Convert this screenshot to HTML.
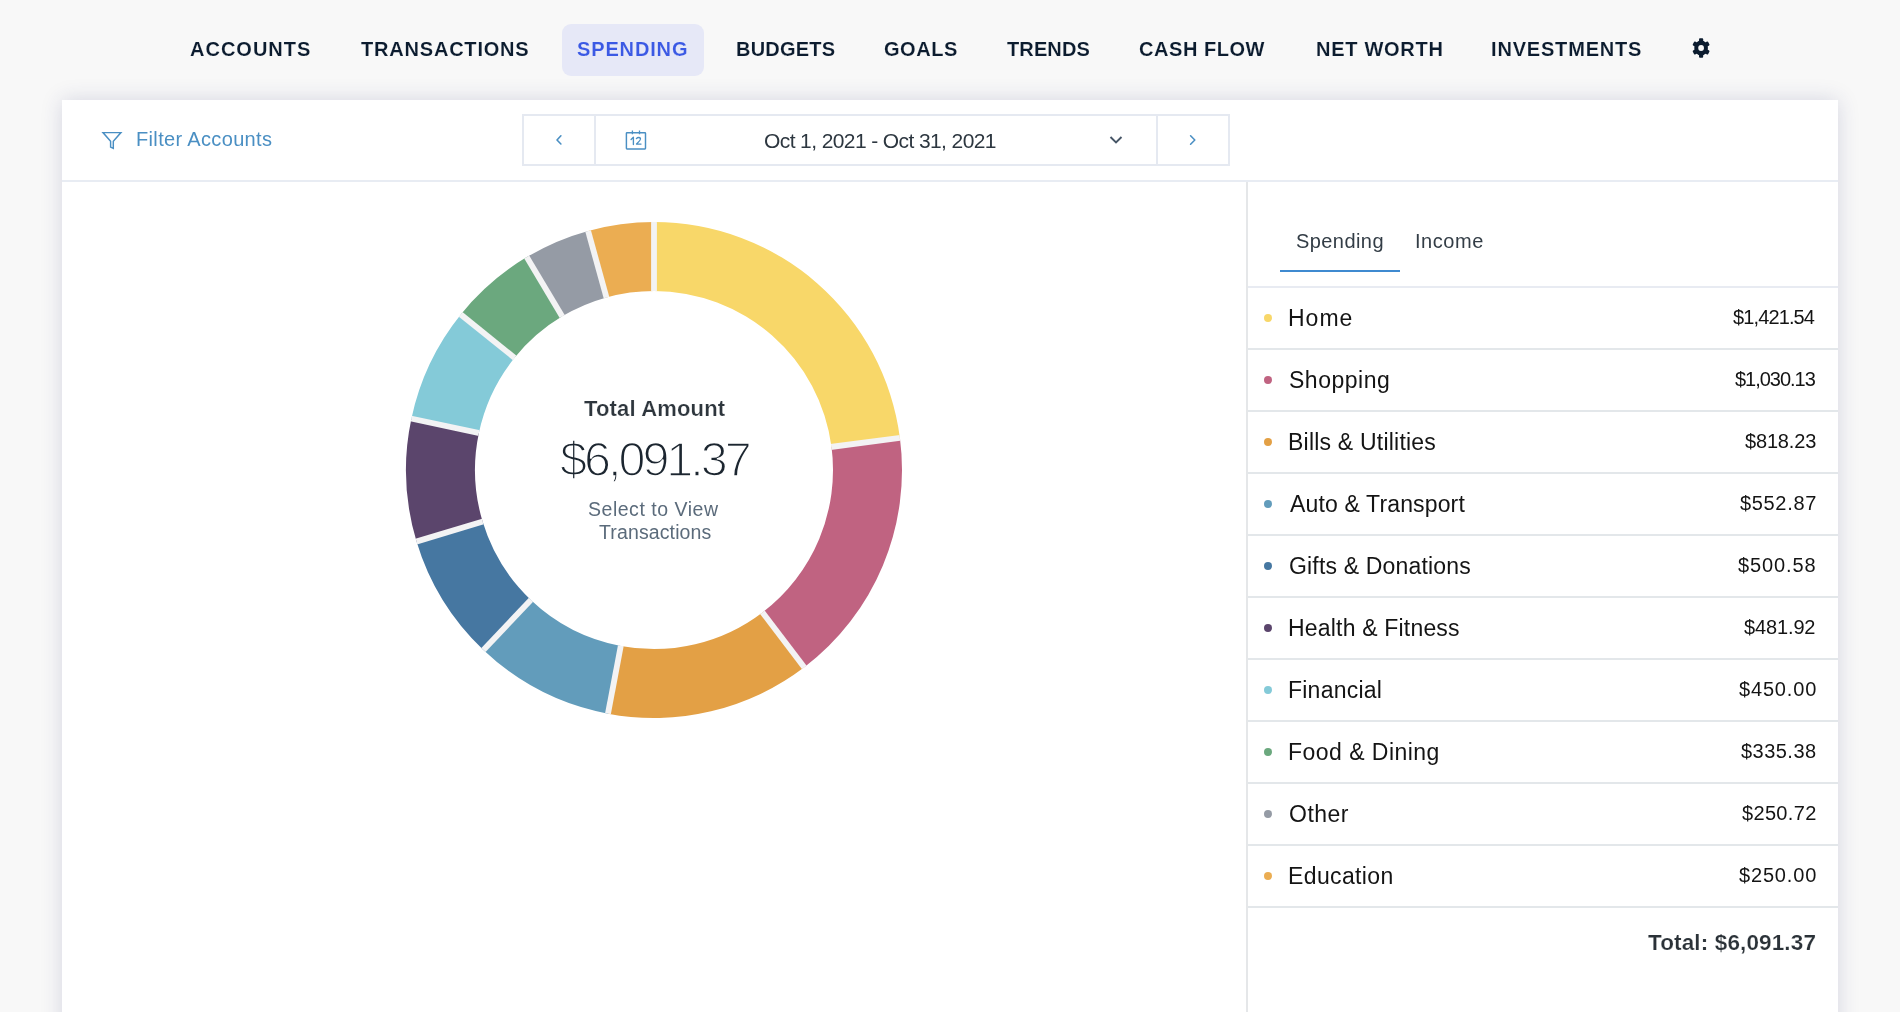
<!DOCTYPE html>
<html><head><meta charset="utf-8">
<style>
*{box-sizing:border-box;margin:0;padding:0}
html,body{width:1900px;height:1012px;overflow:hidden;background:#f8f8f8;font-family:"Liberation Sans",sans-serif}
.abs{position:absolute}
.t{position:absolute;white-space:nowrap;will-change:transform}
.hl{position:absolute;height:2px;background:#e3e7ea}
.vl{position:absolute;width:2px;background:#e5e9f1}
.dot{position:absolute;left:1264px;width:8px;height:8px;border-radius:50%}
</style></head><body>
<div class="abs" style="left:562px;top:24px;width:142px;height:52px;border-radius:9px;background:#e6e8f7"></div>
<div class="abs" style="left:62px;top:100px;width:1776px;height:1000px;background:#fff;box-shadow:0 0 20px rgba(40,45,110,0.17)"></div>
<div class="hl" style="left:62px;top:180px;width:1776px;background:#e8ecf3"></div>
<div class="abs" style="left:522px;top:114px;width:708px;height:52px;border:2px solid #e5e9f1"></div>
<div class="vl" style="left:594px;top:114px;height:52px"></div>
<div class="vl" style="left:1156px;top:114px;height:52px"></div>
<div class="vl" style="left:1246px;top:182px;height:830px;background:#e5e7e9"></div>
<div class="hl" style="left:1248px;top:286px;width:590px;background:#e8ebf2"></div>
<div class="abs" style="left:1280px;top:270px;width:120px;height:2px;background:#3f8ad0"></div>
<div class="hl" style="left:1248px;top:348px;width:590px"></div>
<div class="hl" style="left:1248px;top:410px;width:590px"></div>
<div class="hl" style="left:1248px;top:472px;width:590px"></div>
<div class="hl" style="left:1248px;top:534px;width:590px"></div>
<div class="hl" style="left:1248px;top:596px;width:590px"></div>
<div class="hl" style="left:1248px;top:658px;width:590px"></div>
<div class="hl" style="left:1248px;top:720px;width:590px"></div>
<div class="hl" style="left:1248px;top:782px;width:590px"></div>
<div class="hl" style="left:1248px;top:844px;width:590px"></div>
<div class="hl" style="left:1248px;top:906px;width:590px"></div>
<div class="dot" style="top:314px;background:#f8d769"></div>
<div class="dot" style="top:376px;background:#c06381"></div>
<div class="dot" style="top:438px;background:#e3a045"></div>
<div class="dot" style="top:500px;background:#629cbb"></div>
<div class="dot" style="top:562px;background:#4677a1"></div>
<div class="dot" style="top:624px;background:#5b456c"></div>
<div class="dot" style="top:686px;background:#84cad8"></div>
<div class="dot" style="top:748px;background:#6ba87e"></div>
<div class="dot" style="top:810px;background:#959ba5"></div>
<div class="dot" style="top:872px;background:#ebad52"></div>
<svg class="abs" style="left:0;top:0" width="1240" height="1012"><defs><clipPath id="rc"><path clip-rule="evenodd" d="M406 470A248 248 0 1 1 902 470A248 248 0 1 1 406 470ZM475 470A179 179 0 1 0 833 470A179 179 0 1 0 475 470Z"/></clipPath></defs><path d="M654.00 222.00A248 248 0 0 1 899.92 437.94L831.50 446.86A179 179 0 0 0 654.00 291.00Z" fill="#f8d769"/><path d="M899.92 437.94A248 248 0 0 1 804.26 667.30L762.45 612.40A179 179 0 0 0 831.50 446.86Z" fill="#c06381"/><path d="M804.26 667.30A248 248 0 0 1 607.98 713.69L620.79 645.89A179 179 0 0 0 762.45 612.40Z" fill="#e3a045"/><path d="M607.98 713.69A248 248 0 0 1 483.39 649.99L530.86 599.91A179 179 0 0 0 620.79 645.89Z" fill="#629cbb"/><path d="M483.39 649.99A248 248 0 0 1 416.53 541.49L482.60 521.60A179 179 0 0 0 530.86 599.91Z" fill="#4677a1"/><path d="M416.53 541.49A248 248 0 0 1 411.38 418.64L478.88 432.93A179 179 0 0 0 482.60 521.60Z" fill="#5b456c"/><path d="M411.38 418.64A248 248 0 0 1 460.80 314.50L514.56 357.77A179 179 0 0 0 478.88 432.93Z" fill="#84cad8"/><path d="M460.80 314.50A248 248 0 0 1 526.77 257.12L562.17 316.35A179 179 0 0 0 514.56 357.77Z" fill="#6ba87e"/><path d="M526.77 257.12A248 248 0 0 1 588.09 230.92L606.43 297.44A179 179 0 0 0 562.17 316.35Z" fill="#959ba5"/><path d="M588.09 230.92A248 248 0 0 1 654.00 222.00L654.00 291.00A179 179 0 0 0 606.43 297.44Z" fill="#ebad52"/><g clip-path="url(#rc)" stroke="#f3f3f4" stroke-width="5.8"><line x1="654.00" y1="294.00" x2="654.00" y2="219.00"/><line x1="828.52" y1="447.25" x2="902.89" y2="437.55"/><line x1="760.64" y1="610.02" x2="806.08" y2="669.68"/><line x1="621.34" y1="642.94" x2="607.43" y2="716.64"/><line x1="532.92" y1="597.73" x2="481.32" y2="652.17"/><line x1="485.47" y1="520.74" x2="413.66" y2="542.36"/><line x1="481.82" y1="433.55" x2="408.44" y2="418.02"/><line x1="516.89" y1="359.65" x2="458.47" y2="312.62"/><line x1="563.71" y1="318.93" x2="525.23" y2="254.55"/><line x1="607.23" y1="300.33" x2="587.30" y2="228.03"/></g></svg>
<svg class="abs" style="left:1680px;top:28px" width="42" height="42" viewBox="1680 28 42 42"><g transform="translate(1701.1 48) scale(0.9 1) translate(-1701.1 -48)"><g fill="#0c1c2f"><circle cx="1701.1" cy="48" r="7.6"/><rect x="1698.8" y="38.15" width="4.6" height="9.85" rx="1.0" transform="rotate(0 1701.1 48)"/><rect x="1698.8" y="38.15" width="4.6" height="9.85" rx="1.0" transform="rotate(60 1701.1 48)"/><rect x="1698.8" y="38.15" width="4.6" height="9.85" rx="1.0" transform="rotate(120 1701.1 48)"/><rect x="1698.8" y="38.15" width="4.6" height="9.85" rx="1.0" transform="rotate(180 1701.1 48)"/><rect x="1698.8" y="38.15" width="4.6" height="9.85" rx="1.0" transform="rotate(240 1701.1 48)"/><rect x="1698.8" y="38.15" width="4.6" height="9.85" rx="1.0" transform="rotate(300 1701.1 48)"/></g><ellipse cx="1701.1" cy="48" rx="3.2" ry="3.05" fill="#f8f8f8"/></g></svg>
<svg class="abs" style="left:96px;top:126px" width="32" height="30" viewBox="96 126 32 30" fill="none" stroke="#4a8fc3" stroke-width="1.45" stroke-linejoin="miter">
<path d="M103 132.6H120.9L113.3 141.2V148.4L110.6 147.1V141.2Z"/></svg>
<svg class="abs" style="left:550px;top:128px" width="20" height="24" viewBox="550 128 20 24" fill="none" stroke="#4a8fc3" stroke-width="1.6">
<path d="M560.9 135.8L557 140L560.9 144" stroke-linecap="round" stroke-linejoin="round"/></svg>
<svg class="abs" style="left:1184px;top:128px" width="20" height="24" viewBox="1184 128 20 24" fill="none" stroke="#4a8fc3" stroke-width="1.6">
<path d="M1190.6 135.8L1194.8 140L1190.6 144.2" stroke-linecap="round" stroke-linejoin="round"/></svg>
<svg class="abs" style="left:1104px;top:128px" width="24" height="24" viewBox="1104 128 24 24" fill="none" stroke="#465566" stroke-width="1.9">
<path d="M1110.5 137L1116 142.5L1121.5 137"/></svg>
<svg class="abs" style="left:620px;top:126px" width="32" height="30" viewBox="620 126 32 30" fill="none" stroke="#4a8fc3">
<rect x="626.4" y="132.7" width="19.1" height="16.2" rx="0.6" stroke-width="1.45"/>
<path d="M632.4 130.6V134.3M639.5 130.6V134.3" stroke-width="1.3"/>
<path d="M631.1 139.6L633.4 137.3V144.6" stroke-width="1.35" stroke-linecap="round" stroke-linejoin="round"/>
<path d="M636.4 138.6C637.6 137.2 639.8 137.2 640.4 138.4C641 139.6 639.6 141.2 636.5 144.1H641" stroke-width="1.35" stroke-linecap="round" stroke-linejoin="round"/></svg>
<div class="t" style="left:190.00px;top:36.97px;font-size:20px;line-height:24px;color:#0c1c2f;font-weight:bold;letter-spacing:1.000px;-webkit-text-stroke:0.1px #f8f8f8;">ACCOUNTS</div>
<div class="t" style="left:360.50px;top:36.97px;font-size:20px;line-height:24px;color:#0c1c2f;font-weight:bold;letter-spacing:0.800px;-webkit-text-stroke:0.1px #f8f8f8;">TRANSACTIONS</div>
<div class="t" style="left:577.00px;top:36.97px;font-size:20px;line-height:24px;color:#3b59e4;font-weight:bold;letter-spacing:0.857px;-webkit-text-stroke:0.1px #e6e8f7;">SPENDING</div>
<div class="t" style="left:736.10px;top:36.97px;font-size:20px;line-height:24px;color:#0c1c2f;font-weight:bold;letter-spacing:0.200px;-webkit-text-stroke:0.1px #f8f8f8;">BUDGETS</div>
<div class="t" style="left:883.70px;top:36.97px;font-size:20px;line-height:24px;color:#0c1c2f;font-weight:bold;letter-spacing:0.550px;-webkit-text-stroke:0.1px #f8f8f8;">GOALS</div>
<div class="t" style="left:1007.00px;top:36.97px;font-size:20px;line-height:24px;color:#0c1c2f;font-weight:bold;letter-spacing:0.120px;-webkit-text-stroke:0.1px #f8f8f8;">TRENDS</div>
<div class="t" style="left:1139.40px;top:36.97px;font-size:20px;line-height:24px;color:#0c1c2f;font-weight:bold;letter-spacing:0.550px;-webkit-text-stroke:0.1px #f8f8f8;">CASH FLOW</div>
<div class="t" style="left:1315.80px;top:36.97px;font-size:20px;line-height:24px;color:#0c1c2f;font-weight:bold;letter-spacing:0.725px;-webkit-text-stroke:0.1px #f8f8f8;">NET WORTH</div>
<div class="t" style="left:1490.70px;top:36.97px;font-size:20px;line-height:24px;color:#0c1c2f;font-weight:bold;letter-spacing:0.820px;-webkit-text-stroke:0.1px #f8f8f8;">INVESTMENTS</div>
<div class="t" style="left:135.70px;top:127.07px;font-size:20px;line-height:24px;color:#4a8fc3;font-weight:normal;letter-spacing:0.343px;">Filter Accounts</div>
<div class="t" style="left:764.00px;top:128.22px;font-size:21px;line-height:25px;color:#2d3740;font-weight:normal;letter-spacing:-0.600px;">Oct 1, 2021 - Oct 31, 2021</div>
<div class="t" style="left:1295.80px;top:229.27px;font-size:20px;line-height:24px;color:#333d46;font-weight:normal;letter-spacing:0.429px;">Spending</div>
<div class="t" style="left:1414.50px;top:229.27px;font-size:20px;line-height:24px;color:#333d46;font-weight:normal;letter-spacing:0.560px;">Income</div>
<div class="t" style="left:1287.60px;top:304.13px;font-size:23px;line-height:28px;color:#141414;font-weight:normal;letter-spacing:1.000px;">Home</div>
<div class="t" style="left:1733.00px;top:304.97px;font-size:20px;line-height:24px;color:#141414;font-weight:normal;letter-spacing:-0.875px;">$1,421.54</div>
<div class="t" style="left:1288.60px;top:366.13px;font-size:23px;line-height:28px;color:#141414;font-weight:normal;letter-spacing:0.514px;">Shopping</div>
<div class="t" style="left:1734.80px;top:366.97px;font-size:20px;line-height:24px;color:#141414;font-weight:normal;letter-spacing:-1.025px;">$1,030.13</div>
<div class="t" style="left:1287.60px;top:428.13px;font-size:23px;line-height:28px;color:#141414;font-weight:normal;letter-spacing:0.213px;">Bills &amp; Utilities</div>
<div class="t" style="left:1744.50px;top:428.97px;font-size:20px;line-height:24px;color:#141414;font-weight:normal;letter-spacing:-0.167px;">$818.23</div>
<div class="t" style="left:1289.60px;top:490.13px;font-size:23px;line-height:28px;color:#141414;font-weight:normal;letter-spacing:0.147px;">Auto &amp; Transport</div>
<div class="t" style="left:1739.50px;top:490.97px;font-size:20px;line-height:24px;color:#141414;font-weight:normal;letter-spacing:0.667px;">$552.87</div>
<div class="t" style="left:1288.60px;top:552.13px;font-size:23px;line-height:28px;color:#141414;font-weight:normal;letter-spacing:0.175px;">Gifts &amp; Donations</div>
<div class="t" style="left:1737.90px;top:552.97px;font-size:20px;line-height:24px;color:#141414;font-weight:normal;letter-spacing:0.900px;">$500.58</div>
<div class="t" style="left:1287.60px;top:614.13px;font-size:23px;line-height:28px;color:#141414;font-weight:normal;letter-spacing:0.187px;">Health &amp; Fitness</div>
<div class="t" style="left:1744.20px;top:614.97px;font-size:20px;line-height:24px;color:#141414;font-weight:normal;letter-spacing:-0.133px;">$481.92</div>
<div class="t" style="left:1287.60px;top:676.13px;font-size:23px;line-height:28px;color:#141414;font-weight:normal;letter-spacing:0.225px;">Financial</div>
<div class="t" style="left:1738.50px;top:676.97px;font-size:20px;line-height:24px;color:#141414;font-weight:normal;letter-spacing:0.833px;">$450.00</div>
<div class="t" style="left:1287.60px;top:738.13px;font-size:23px;line-height:28px;color:#141414;font-weight:normal;letter-spacing:0.467px;">Food &amp; Dining</div>
<div class="t" style="left:1740.80px;top:738.97px;font-size:20px;line-height:24px;color:#141414;font-weight:normal;letter-spacing:0.467px;">$335.38</div>
<div class="t" style="left:1288.60px;top:800.13px;font-size:23px;line-height:28px;color:#141414;font-weight:normal;letter-spacing:0.500px;">Other</div>
<div class="t" style="left:1741.50px;top:800.97px;font-size:20px;line-height:24px;color:#141414;font-weight:normal;letter-spacing:0.333px;">$250.72</div>
<div class="t" style="left:1287.60px;top:862.13px;font-size:23px;line-height:28px;color:#141414;font-weight:normal;letter-spacing:0.375px;">Education</div>
<div class="t" style="left:1738.50px;top:862.97px;font-size:20px;line-height:24px;color:#141414;font-weight:normal;letter-spacing:0.833px;">$250.00</div>
<div class="t" style="left:1647.90px;top:928.70px;font-size:22.5px;line-height:27px;color:#2b3238;font-weight:bold;letter-spacing:0.133px;-webkit-text-stroke:0.2px #fff;">Total: $6,091.37</div>
<div class="t" style="left:583.80px;top:396.37px;font-size:22px;line-height:26px;color:#2e363d;font-weight:bold;letter-spacing:0.164px;-webkit-text-stroke:0.2px #fff;">Total Amount</div>
<div class="t" style="left:559.50px;top:430.19px;font-size:48.5px;line-height:58px;color:#1c2630;font-weight:normal;letter-spacing:-3.000px;-webkit-text-stroke:1.6px #fff;">$6,091.37</div>
<div class="t" style="left:588.20px;top:497.74px;font-size:19.5px;line-height:23px;color:#5b6b7b;font-weight:normal;letter-spacing:0.523px;">Select to View</div>
<div class="t" style="left:599.10px;top:520.94px;font-size:19.5px;line-height:23px;color:#5b6b7b;font-weight:normal;letter-spacing:0.127px;">Transactions</div>
</body></html>
